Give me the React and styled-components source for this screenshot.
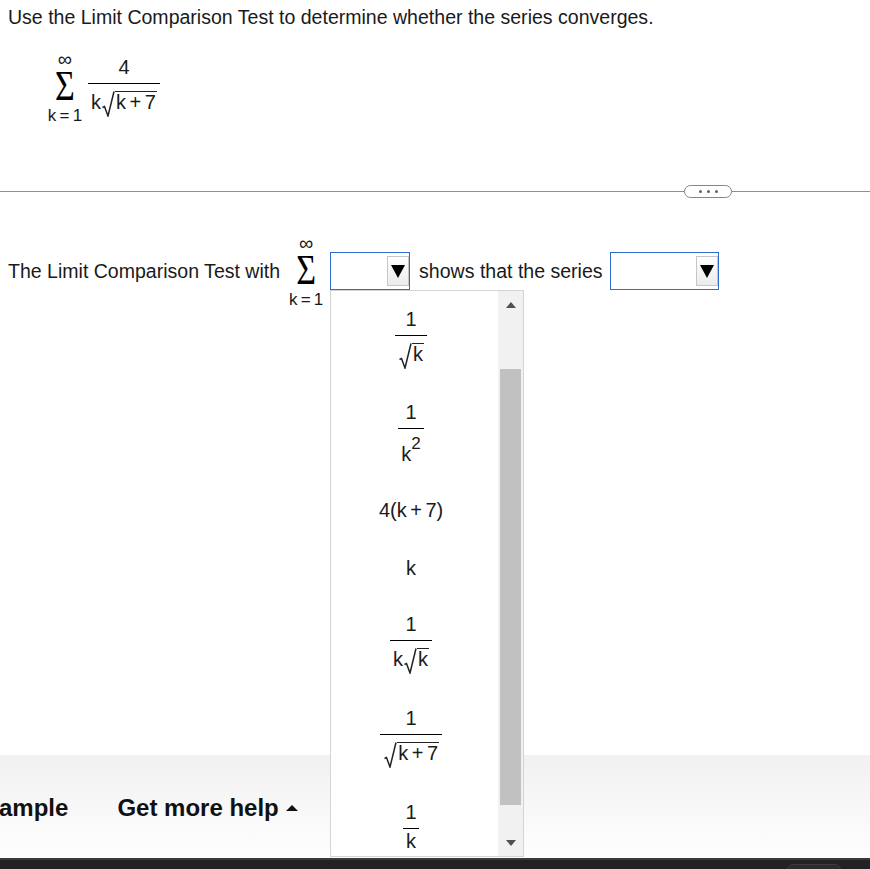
import React from "react";
import styled, { createGlobalStyle } from "styled-components";

const Global = createGlobalStyle`
  html, body { margin: 0; padding: 0; background: #fff; }
  body { font-family: "Liberation Sans", Arial, sans-serif; color: #1a1a1a; }
`;

const Page = styled.div`
  width: 870px;
  height: 869px;
  display: flex;
  flex-direction: column;
  overflow: hidden;
`;

const Main = styled.main`
  flex: 1;
  min-height: 0;
`;

const Question = styled.section`
  height: 191px;
  padding: 6px 0 0 8px;
  box-sizing: border-box;
`;

const Prompt = styled.p`
  margin: 0;
  font-size: 19.55px;
  line-height: 23px;
`;

const SeriesRow = styled.div`
  display: flex;
  align-items: flex-start;
  gap: 5px;
  margin: 18px 0 0 39px;
`;

const SeriesFraction = styled.div`
  display: flex;
  margin-top: 8px;
`;

const Divider = styled.div`
  position: relative;
  height: 1px;
  background: #8a9099;
`;

const Grip = styled.button`
  position: absolute;
  left: 684px;
  top: -6px;
  width: 48px;
  height: 13px;
  box-sizing: border-box;
  padding: 0;
  display: flex;
  align-items: center;
  justify-content: center;
  gap: 5px;
  background: #fff;
  border: 1px solid #7d8794;
  border-radius: 7px;
`;

const GripDot = styled.span`
  width: 3px;
  height: 3px;
  border-radius: 50%;
  background: #5f6670;
`;

const AnswerRow = styled.section`
  display: flex;
  align-items: center;
  padding: 39px 0 0 8px;
  font-size: 19.55px;
`;

const Sigma = styled.span`
  display: inline-flex;
  flex-direction: column;
  align-items: center;
  width: 36px;
  padding-top: 5px;
  margin-left: ${(p) => p.$left || 0}px;
`;

const SigmaTop = styled.span`
  font-size: 20px;
  line-height: 14px;
`;

const SigmaGlyph = styled.span`
  font-family: "Liberation Serif", serif;
  font-size: 34px;
  line-height: 39px;
  color: #000;
  transform: scaleY(1.25);
`;

const SigmaBottom = styled.span`
  font-size: 17px;
  line-height: 22px;
  white-space: nowrap;
  word-spacing: -1.5px;
`;

const Fraction = styled.span`
  display: inline-flex;
  flex-direction: column;
  align-items: center;
  font-size: 20px;
  word-spacing: -2px;
`;

const Numerator = styled.span`
  line-height: 24px;
  padding-bottom: 4px;
`;

const Denominator = styled.span`
  align-self: stretch;
  text-align: center;
  border-top: 1px solid #000;
  padding: ${(p) => p.$pad}px 3px 0;
  line-height: 24px;
  white-space: nowrap;
`;

const Radical = styled.span`
  display: inline-flex;
`;

const RadicalBody = styled.span`
  align-self: baseline;
  border-top: 1px solid #222;
  line-height: 21px;
  padding: 0 1px;
`;

const SurdIcon = styled.svg`
  align-self: flex-start;
  flex: none;
`;

const Sup = styled.sup`
  font-size: 17px;
  line-height: 0;
  vertical-align: 12px;
`;

const SelectWrap = styled.span`
  position: relative;
  display: inline-flex;
  margin: ${(p) => p.$margin};
`;

const SelectBox = styled.span`
  width: ${(p) => p.$width}px;
  height: 38px;
  box-sizing: border-box;
  display: flex;
  justify-content: flex-end;
  align-items: center;
  background: #fff;
  border: 1px solid #2f6bd1;
`;

const ArrowButton = styled.span`
  width: 22px;
  height: 30px;
  box-sizing: border-box;
  display: flex;
  align-items: center;
  justify-content: center;
  background: linear-gradient(#fff, #ececec);
  border: 1px solid #c6c6c6;
`;

const ArrowDown = styled.span`
  width: 0;
  height: 0;
  border-left: 7px solid transparent;
  border-right: 7px solid transparent;
  border-top: 13px solid #000;
`;

const Popup = styled.div`
  position: absolute;
  top: 38px;
  left: 0;
  width: 194px;
  height: 567px;
  box-sizing: border-box;
  display: flex;
  background: #fff;
  border: 1px solid #d4d4d4;
  z-index: 5;
`;

const OptionList = styled.ul`
  flex: 1;
  margin: 0;
  padding: 0 7px 0 0;
  list-style: none;
  overflow: hidden;
`;

const Option = styled.li`
  height: ${(p) => p.$height}px;
  display: flex;
  align-items: center;
  justify-content: center;
  font-size: 20px;
  word-spacing: -2px;
`;

const Track = styled.div`
  width: 25px;
  display: flex;
  flex-direction: column;
  align-items: center;
  background: #f1f1f1;
`;

const TrackArrow = styled.span`
  height: ${(p) => p.$height}px;
  box-sizing: border-box;
  padding-top: ${(p) => p.$top}px;
  display: flex;
  justify-content: center;
`;

const Triangle = styled.span`
  width: 0;
  height: 0;
  border-left: 5.5px solid transparent;
  border-right: 5.5px solid transparent;
  ${(p) => (p.$up ? "border-bottom: 6px solid #505050;" : "border-top: 6px solid #505050;")}
`;

const Thumb = styled.div`
  width: 21px;
  height: 436px;
  background: #c1c1c1;
`;

const Footer = styled.footer`
  height: 103px;
  display: flex;
  align-items: center;
  gap: 49px;
  padding-top: 2px;
  box-sizing: border-box;
  background: linear-gradient(#f1f1f1, #fefefe);
  font-size: 24px;
  font-weight: 700;
  color: #111;
`;

const CutLabel = styled.span`
  margin-left: -1px;
`;

const HelpLink = styled.span`
  display: inline-flex;
  align-items: center;
  gap: 7px;
`;

const SmallUp = styled.span`
  width: 0;
  height: 0;
  border-left: 6px solid transparent;
  border-right: 6px solid transparent;
  border-bottom: 6px solid #111;
`;

const BottomBar = styled.div`
  height: 11px;
  background: #222;
  border-top: 2px solid #3a3a3a;
  box-sizing: border-box;
  position: relative;
`;

const BarTab = styled.span`
  position: absolute;
  left: 787px;
  top: 4px;
  width: 52px;
  height: 8px;
  background: #2b2b2b;
  border: 1px solid #3c3c3c;
  border-radius: 6px 6px 0 0;
`;

const Surd = () => (
  <SurdIcon width="14" height="26" viewBox="0 0 14 26" fill="none" stroke="#222">
    <path d="M1.5 16.5 L3.5 15.5 L7 25 L13 0.5" strokeWidth="1.5" />
  </SurdIcon>
);

const Root = ({ children }) => (
  <Radical>
    <Surd />
    <RadicalBody>{children}</RadicalBody>
  </Radical>
);

const SigmaSign = ({ left }) => (
  <Sigma $left={left}>
    <SigmaTop>∞</SigmaTop>
    <SigmaGlyph>Σ</SigmaGlyph>
    <SigmaBottom>k = 1</SigmaBottom>
  </Sigma>
);

const Frac = ({ top, pad, children }) => (
  <Fraction>
    <Numerator>{top}</Numerator>
    <Denominator $pad={pad}>{children}</Denominator>
  </Fraction>
);

const options = [
  { height: 94, node: <Frac top="1" pad={6}><Root>k</Root></Frac> },
  { height: 96, node: <Frac top="1" pad={13}>k<Sup>2</Sup></Frac> },
  { height: 59, node: <span>4(k + 7)</span> },
  { height: 57, node: <span>k</span> },
  { height: 92, node: <Frac top="1" pad={6}>k<Root>k</Root></Frac> },
  { height: 96, node: <Frac top="1" pad={6}><Root>k + 7</Root></Frac> },
  { height: 83, node: <Frac top="1" pad={0}>k</Frac> },
];

const Select = ({ width, margin, children }) => (
  <SelectWrap $margin={margin}>
    <SelectBox $width={width}>
      <ArrowButton>
        <ArrowDown />
      </ArrowButton>
    </SelectBox>
    {children}
  </SelectWrap>
);

export default function App() {
  return (
    <Page>
      <Global />
      <Main>
        <Question>
          <Prompt>Use the Limit Comparison Test to determine whether the series converges.</Prompt>
          <SeriesRow>
            <SigmaSign />
            <SeriesFraction>
              <Frac top="4" pad={6}>k<Root>k + 7</Root></Frac>
            </SeriesFraction>
          </SeriesRow>
        </Question>
        <Divider>
          <Grip aria-label="more">
            <GripDot />
            <GripDot />
            <GripDot />
          </Grip>
        </Divider>
        <AnswerRow>
          The Limit Comparison Test with
          <SigmaSign left={8} />
          <Select width={80} margin="0 9px 0 6px">
            <Popup>
              <OptionList>
                {options.map((o, i) => (
                  <Option key={i} $height={o.height}>{o.node}</Option>
                ))}
              </OptionList>
              <Track>
                <TrackArrow $height={78} $top={11}><Triangle $up /></TrackArrow>
                <Thumb />
                <TrackArrow $height={51} $top={35}><Triangle /></TrackArrow>
              </Track>
            </Popup>
          </Select>
          shows that the series
          <Select width={109} margin="0 0 0 7px" />
        </AnswerRow>
      </Main>
      <Footer>
        <CutLabel>ample</CutLabel>
        <HelpLink>
          Get more help
          <SmallUp />
        </HelpLink>
      </Footer>
      <BottomBar>
        <BarTab />
      </BottomBar>
    </Page>
  );
}
